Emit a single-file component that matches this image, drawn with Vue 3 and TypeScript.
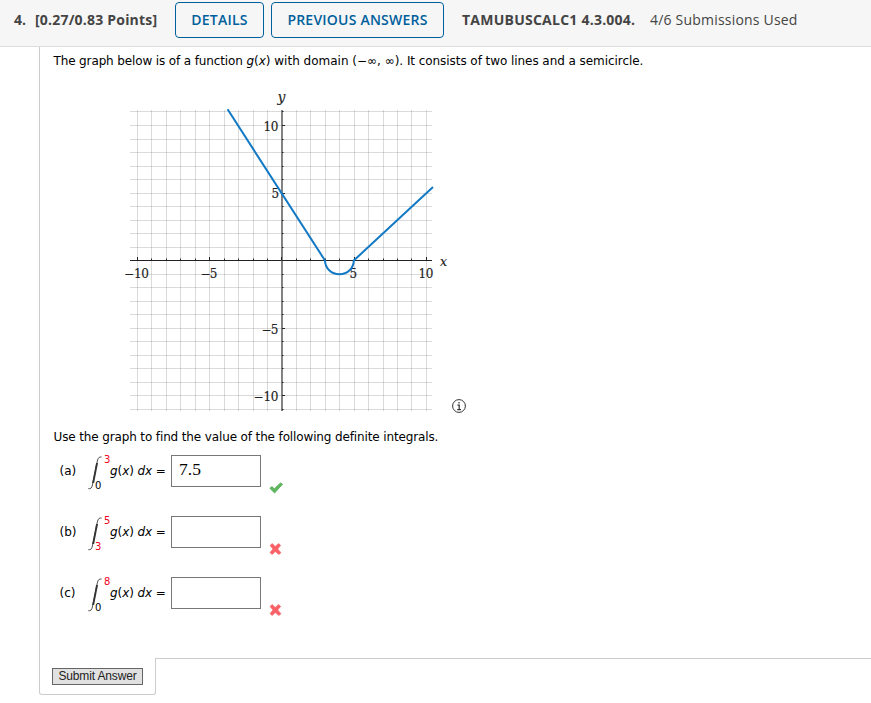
<script setup lang="ts">
import { ref } from 'vue'

interface Part {
  label: string
  upper: string
  lower: string
  lowerRandom: boolean
  answer: string
  correct: boolean
}

const parts = ref<Part[]>([
  { label: '(a)', upper: '3', lower: '0', lowerRandom: false, answer: '7.5', correct: true },
  { label: '(b)', upper: '5', lower: '3', lowerRandom: true, answer: '', correct: false },
  { label: '(c)', upper: '8', lower: '0', lowerRandom: false, answer: '', correct: false },
])

// Plot geometry, in SVG units
const originX = 161.9
const originY = 172.7
const unitX = 14.45
const unitY = 13.52
const px = (v: number): number => originX + v * unitX
const py = (v: number): number => originY - v * unitY

const range = (from: number, to: number): number[] =>
  Array.from({ length: to - from + 1 }, (_, i) => from + i)
const columns = range(-10, 10)
const rows = range(-11, 11)
const snap = (v: number): number => Math.floor(v) + 0.5
</script>

<template>
  <div class="page">
    <header class="bar">
      <span class="number">4.</span>
      <span class="points">[0.27/0.83 Points]</span>
      <button class="pill details">DETAILS</button>
      <button class="pill previous">PREVIOUS ANSWERS</button>
      <span class="source">TAMUBUSCALC1 4.3.004.</span>
      <span class="used">4/6 Submissions Used</span>
    </header>

    <main class="question">
      <p class="statement">The graph below is of a function <span class="domain"><i>g</i>(<i>x</i>) with domain (−∞, ∞).</span> <span class="rest">It consists of two lines and a semicircle.</span></p>

      <div class="figure">
        <svg class="plot" width="340" height="330" viewBox="0 0 340 330">
          <g class="grid">
            <line v-for="c in columns" :key="'c' + c" :x1="snap(px(c))" :x2="snap(px(c))" y1="22" y2="323" />
            <line v-for="r in rows" :key="'r' + r" x1="10" x2="312" :y1="snap(py(r))" :y2="snap(py(r))" />
          </g>
          <g class="labels">
            <text x="4" y="190" textLength="25">−10</text>
            <text x="80.5" y="190" textLength="17">−5</text>
            <text x="229.5" y="190">5</text>
            <text x="298.5" y="190" textLength="15">10</text>
            <text x="143.5" y="43" textLength="15">10</text>
            <text x="151.5" y="110">5</text>
            <text x="141.5" y="246" textLength="17">−5</text>
            <text x="133.5" y="313" textLength="25">−10</text>
            <text class="axis-name" x="157.5" y="13.5">y</text>
            <text class="axis-name small" x="320" y="178">x</text>
          </g>
          <line class="axis-x" x1="10" x2="312" y1="172.5" y2="172.5" />
          <line class="axis-y" x1="162" x2="162" y1="22" y2="323" />
          <g class="ticks">
            <line v-for="c in columns" :key="'tx' + c" :x1="snap(px(c))" :x2="snap(px(c))" :y1="c % 5 ? 170.5 : 169" y2="172.5" />
            <line v-for="r in rows" :key="'ty' + r" x1="162" :x2="r % 5 ? 163.5 : 165" :y1="snap(py(r))" :y2="snap(py(r))" />
          </g>
          <path class="curve" d="M107.6 21.3L205 172.5A14.4 13.8 0 0 0 233.8 172.5L313 99" />
        </svg>
        <svg class="info" width="16" height="16" viewBox="0 0 16 16">
          <circle cx="8" cy="8" r="6.4" fill="#fff" stroke="#333" stroke-width="1" />
          <path d="M8 4V5.6M6.4 7.2H8.2V11.3M6.2 11.6H10" fill="none" stroke="#333" stroke-width="1.2" />
        </svg>
      </div>

      <p class="instruction">Use the graph to find the value of the following definite integrals.</p>

      <div v-for="part in parts" :key="part.label" class="part">
        <span class="label">{{ part.label }}</span>
        <span class="integral">
          <svg width="15" height="34" viewBox="0 0 15 34">
            <path d="M.3 32.6C2.6 33.2 3.8 32 4.4 29L9.3 5C10 1.7 11.3 .6 13.6 1" fill="none" stroke="#555" stroke-width="1" />
            <path d="M4.2 27L8.1 7H10L6.1 27Z" fill="#333" />
          </svg>
          <span class="limits">
            <span class="upper">{{ part.upper }}</span>
            <span class="lower" :class="{ random: part.lowerRandom }">{{ part.lower }}</span>
          </span>
        </span>
        <span class="integrand"><i>g</i>(<i>x</i>) <i>dx</i> =</span>
        <span class="answer">{{ part.answer }}</span>
        <svg v-if="part.correct" class="mark" width="14" height="12" viewBox="0 0 14 12">
          <path d="M.8 6.3L3 4.6L5.3 6.8L11.4 1L13.6 2.2L5.6 11Z" fill="#63b862" stroke="#4ba34c" stroke-width=".7" />
        </svg>
        <svg v-else class="mark" width="14" height="12" viewBox="0 0 14 12">
          <path d="M1 2.5L3.2 .5L6.2 3.4L9.6 .5L11.7 2.4L8.7 6L12 9.7L9.8 11.6L6.3 8.6L3.1 11.6L1 9.6L4 6Z" fill="#fa6268" stroke="#f05056" stroke-width=".5" />
        </svg>
      </div>
    </main>

    <footer class="footer">
      <div class="tab"><button class="submit">Submit Answer</button></div>
      <div class="rule"></div>
    </footer>
  </div>
</template>

<style>
body {
  background: #fff;
  overflow: hidden;
}
</style>

<style scoped>
.page {
  width: 871px;
  height: 703px;
  overflow: hidden;
  font-family: Verdana, "DejaVu Sans", sans-serif;
  font-size: 12px;
  color: #000;
}
.bar {
  display: flex;
  height: 46px;
  padding-left: 14px;
  overflow: hidden;
  background: #f6f6f6;
  border-bottom: 1px solid #ddd;
  font-family: "Open Sans", sans-serif;
  font-size: 14px;
  line-height: 40px;
  color: #444;
  white-space: nowrap;
}
.number,
.points,
.source {
  font-weight: 700;
}
.number {
  width: 21px;
}
.points {
  width: 140px;
  letter-spacing: 0.2px;
}
.pill {
  box-sizing: border-box;
  height: 36px;
  margin-top: 2px;
  padding: 0;
  border: 1px solid #00609c;
  border-radius: 4px;
  background: #f6f6f6;
  color: #00609c;
  font: 600 14px/34px "Open Sans", sans-serif;
  letter-spacing: 0.22px;
}
.details {
  width: 89px;
}
.previous {
  width: 173px;
  margin-left: 7px;
}
.source {
  width: 188px;
  margin-left: 18px;
  letter-spacing: 0.24px;
}
.used {
  letter-spacing: 0.2px;
}
.question {
  box-sizing: border-box;
  height: 611px;
  margin-left: 39px;
  padding: 5px 0 0 13.5px;
  border-left: 1px solid #ccc;
}
.statement,
.instruction {
  margin: 0;
  height: 18px;
  line-height: 18px;
  white-space: nowrap;
  letter-spacing: -0.13px;
}
.domain {
  letter-spacing: 0;
}
.rest {
  letter-spacing: -0.06px;
}
.figure {
  display: flex;
  align-items: flex-end;
  height: 348px;
  padding-left: 66.5px;
}
.plot {
  align-self: flex-start;
  margin-top: 18px;
}
.info {
  margin: 0 0 4px -9px;
}
.grid line {
  stroke: #777;
  stroke-opacity: 0.27;
}
.axis-x {
  stroke: #222;
  stroke-width: 1.2;
}
.axis-y {
  stroke: #777;
  stroke-width: 1.8;
}
.ticks line {
  stroke: #222;
  stroke-width: 1;
}
.labels text {
  font: 12px "DejaVu Serif", serif;
  fill: #222;
  stroke: #222;
  stroke-width: 0.15;
}
.labels .axis-name {
  font-style: italic;
  font-size: 14px;
}
.labels .small {
  font-size: 12.5px;
}
.curve {
  fill: none;
  stroke: #1279c4;
  stroke-width: 2;
}
.instruction {
  margin-top: 10px;
}
.part {
  display: flex;
  align-items: flex-start;
  height: 61px;
  padding-left: 6px;
}
.instruction + .part {
  margin-top: 9px;
}
.label {
  width: 28.5px;
  margin-top: 7px;
  line-height: 18px;
}
.integral {
  display: flex;
  width: 22px;
  height: 36px;
}
.integral > svg {
  flex: none;
  margin-top: 1px;
}
.limits {
  display: flex;
  flex-direction: column;
  justify-content: space-between;
  margin-left: -8px;
  font-size: 10px;
  line-height: 10px;
}
.upper {
  margin-left: 9px;
  color: #f00020;
}
.random {
  color: #f00020;
}
.integrand {
  width: 61px;
  margin-top: 7px;
  line-height: 18px;
  letter-spacing: -0.08px;
  white-space: nowrap;
}
.answer {
  box-sizing: border-box;
  width: 90px;
  height: 32px;
  padding-left: 7px;
  border: 1px solid #777;
  font: 17.5px/27px "Liberation Serif", serif;
}
.mark {
  margin: 27px 0 0 8px;
}
.footer {
  display: flex;
  padding-left: 39px;
}
.tab {
  box-sizing: border-box;
  width: 117px;
  height: 37px;
  padding: 10px 0 0 12px;
  border: solid #ccc;
  border-width: 0 1px 1px;
  border-radius: 0 0 3px 3px;
}
.submit {
  display: block;
  box-sizing: border-box;
  width: 91px;
  height: 17px;
  padding: 0;
  border: 1px solid #666;
  background: #e1e1e1;
  color: #222;
  font: 12px/15px "Liberation Sans", sans-serif;
  letter-spacing: -0.15px;
}
.rule {
  flex: 1;
  border-top: 1px solid #ccc;
}
</style>
